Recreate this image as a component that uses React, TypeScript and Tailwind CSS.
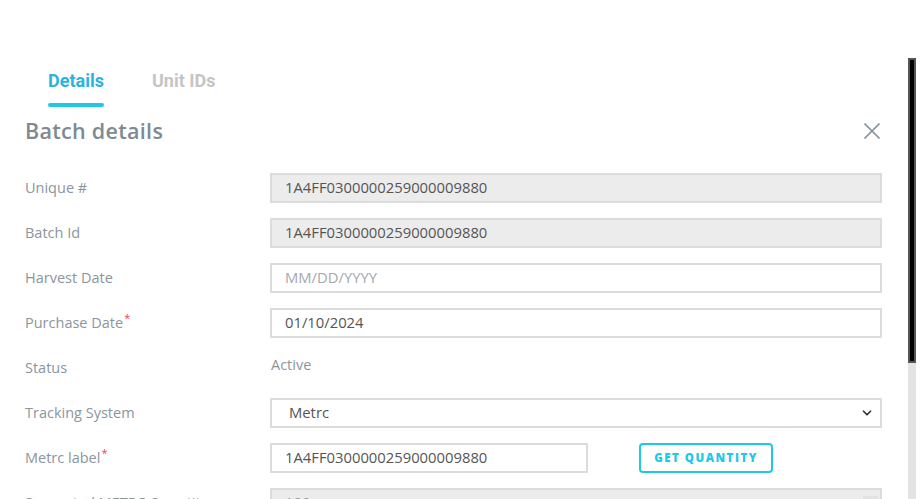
import { ChevronDown } from "lucide-react"

const label = "text-[14.5px] text-[#8b959e]"
const box = "h-[30px] border-2 border-[#dcdcdc] text-[14.8px] text-[#555] flex items-center"

function Row({ name, required, children }: { name: string; required?: boolean; children: React.ReactNode }) {
  return (
    <div className="flex items-center h-[45px]">
      <div className={`w-[245px] shrink-0 ${label}`}>
        {name}
        {required && <sup className="text-[#f04646] text-[11px] ml-[1px]">*</sup>}
      </div>
      <div className="flex-1 flex items-center">{children}</div>
    </div>
  )
}

export default function App() {
  return (
    <div
      className="relative w-[923px] h-[499px] overflow-hidden bg-white"
      style={{ fontFamily: '"Open Sans", "Noto Sans", sans-serif' }}
    >
      <div className="pl-[25px] pr-[41px]">
        <div className="flex gap-[48px] ml-[23px] pt-[70px]" style={{ fontFamily: "Roboto, sans-serif" }}>
          <div className="flex flex-col">
            <span className="text-[18px] leading-[22px] font-bold text-[#2bb3dd]">Details</span>
            <span className="mt-[11px] h-[4px] rounded-full bg-[#1ec8e6]" />
          </div>
          <div className="flex flex-col">
            <span className="text-[18px] leading-[22px] font-bold text-[#c5c5c5]">Unit IDs</span>
          </div>
        </div>

        <div className="flex items-center justify-between mt-[10px] h-[28px]">
          <h2 className="text-[21.5px] font-semibold text-[#7e8a93] tracking-[0.3px]">Batch details</h2>
          <svg width="16" height="16" viewBox="0 0 16 16" className="mr-[2px]">
            <path d="M0.5 0.5 L15.5 15.5 M15.5 0.5 L0.5 15.5" stroke="#8b959e" strokeWidth="1.6" fill="none" />
          </svg>
        </div>

        <div className="mt-[20px]">
          <Row name="Unique #">
            <div className={`${box} w-full bg-[#ececec] pl-[13px]`}>1A4FF0300000259000009880</div>
          </Row>
          <Row name="Batch Id">
            <div className={`${box} w-full bg-[#ececec] pl-[13px]`}>1A4FF0300000259000009880</div>
          </Row>
          <Row name="Harvest Date">
            <div className={`${box} w-full pl-[13px] text-[#a3a9ae]`}>MM/DD/YYYY</div>
          </Row>
          <Row name="Purchase Date" required>
            <div className={`${box} w-full pl-[13px]`}>01/10/2024</div>
          </Row>
          <Row name="Status">
            <div className="text-[14.5px] text-[#8b959e] pl-[1px] -mt-[6px]">Active</div>
          </Row>
          <Row name="Tracking System">
            <div className={`${box} w-full pl-[17px] justify-between pr-[6px]`}>
              <span>Metrc</span>
              <ChevronDown className="w-[14px] h-[14px] text-[#333]" strokeWidth={3} />
            </div>
          </Row>
          <Row name="Metrc label" required>
            <div className={`${box} w-[318px] pl-[13px]`}>1A4FF0300000259000009880</div>
            <button className="ml-[51px] w-[134px] h-[30px] border-2 border-[#1ec8e6] rounded-[4px] text-[11.5px] font-extrabold tracking-[1.5px] text-[#1ec8e6] pt-[1px]">
              GET QUANTITY
            </button>
          </Row>
          <Row name="Suggested METRC Quantity">
            <div className={`${box} w-full bg-[#ececec] pl-[13px] text-[#999] justify-between pr-[2px]`}>
              <span>100</span>
              <span className="w-[15px] h-[13px] bg-[#e2e2e2] flex items-center justify-center text-[8px] text-[#888]">▲</span>
            </div>
          </Row>
        </div>
      </div>

      <div className="absolute top-[58px] bottom-0 left-[908px] w-[8px] bg-[#e3e3e3]">
        <div className="h-[305px] bg-black border-2 border-[#555]" />
      </div>
    </div>
  )
}
